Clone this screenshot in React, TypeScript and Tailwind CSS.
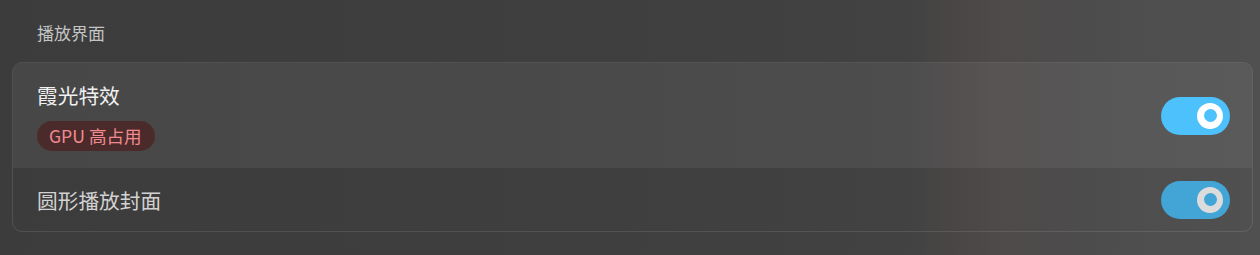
import { useState } from 'react';

function Toggle({ on, dim, onChange }: { on: boolean; dim?: boolean; onChange: () => void }) {
  return (
    <button
      type="button"
      onClick={onChange}
      className={`relative flex h-[38px] w-[69px] items-center rounded-full px-[7px] ${
        on ? (dim ? 'justify-end bg-[#43a4d6]' : 'justify-end bg-[#4dc1fb]') : 'justify-start bg-[#666]'
      }`}
    >
      <span
        className={`flex h-[26px] w-[26px] items-center justify-center rounded-full ${dim ? 'bg-[#dcdcdc]' : 'bg-white'}`}
      >
        <span className={`h-[13px] w-[13px] rounded-full ${dim ? 'bg-[#43a4d6]' : 'bg-[#4dc1fb]'}`} />
      </span>
    </button>
  );
}

export default function App() {
  const [glow, setGlow] = useState(true);
  const [round, setRound] = useState(true);

  return (
    <div
      className="h-[255px] w-[1260px] overflow-hidden bg-[linear-gradient(to_right,#3c3c3c_0%,#3f3f3f_50%,#424242_72%,#4a4645_76%,#4e4a49_79%,#4d4b4b_83%,#4e4e4e_90%,#505050_100%)] pl-[12px] pr-[7px] pt-[21px] font-['Noto_Sans_CJK_SC','Noto_Sans',sans-serif]"
    >
      {/* Section title */}
      <h2 className="mb-[17px] pl-[25px] text-[17px] leading-[24px] text-[#c4c4c4]">播放界面</h2>

      <div className="overflow-hidden rounded-[10px] border border-white/10">
        {/* Glow effect */}
        <div className="flex h-[105px] items-center justify-between bg-white/[0.06] pl-[24px] pr-[22px]">
          <div className="flex flex-col items-start gap-[12px]">
            <span className="text-[20.7px] leading-[28px] text-[#f0f0f0]">霞光特效</span>
            <span className="rounded-full bg-[#4b2a2b] pl-[12px] pr-[13px] text-[17.6px] leading-[30px] text-[#f28b8f]">
              GPU 高占用
            </span>
          </div>
          <Toggle on={glow} onChange={() => setGlow(!glow)} />
        </div>

        {/* Round cover */}
        <div className="flex h-[63px] items-center justify-between pl-[24px] pr-[22px]">
          <span className="text-[20.7px] leading-[28px] text-[#d2d2d2]">圆形播放封面</span>
          <Toggle on={round} dim onChange={() => setRound(!round)} />
        </div>
      </div>
    </div>
  );
}
